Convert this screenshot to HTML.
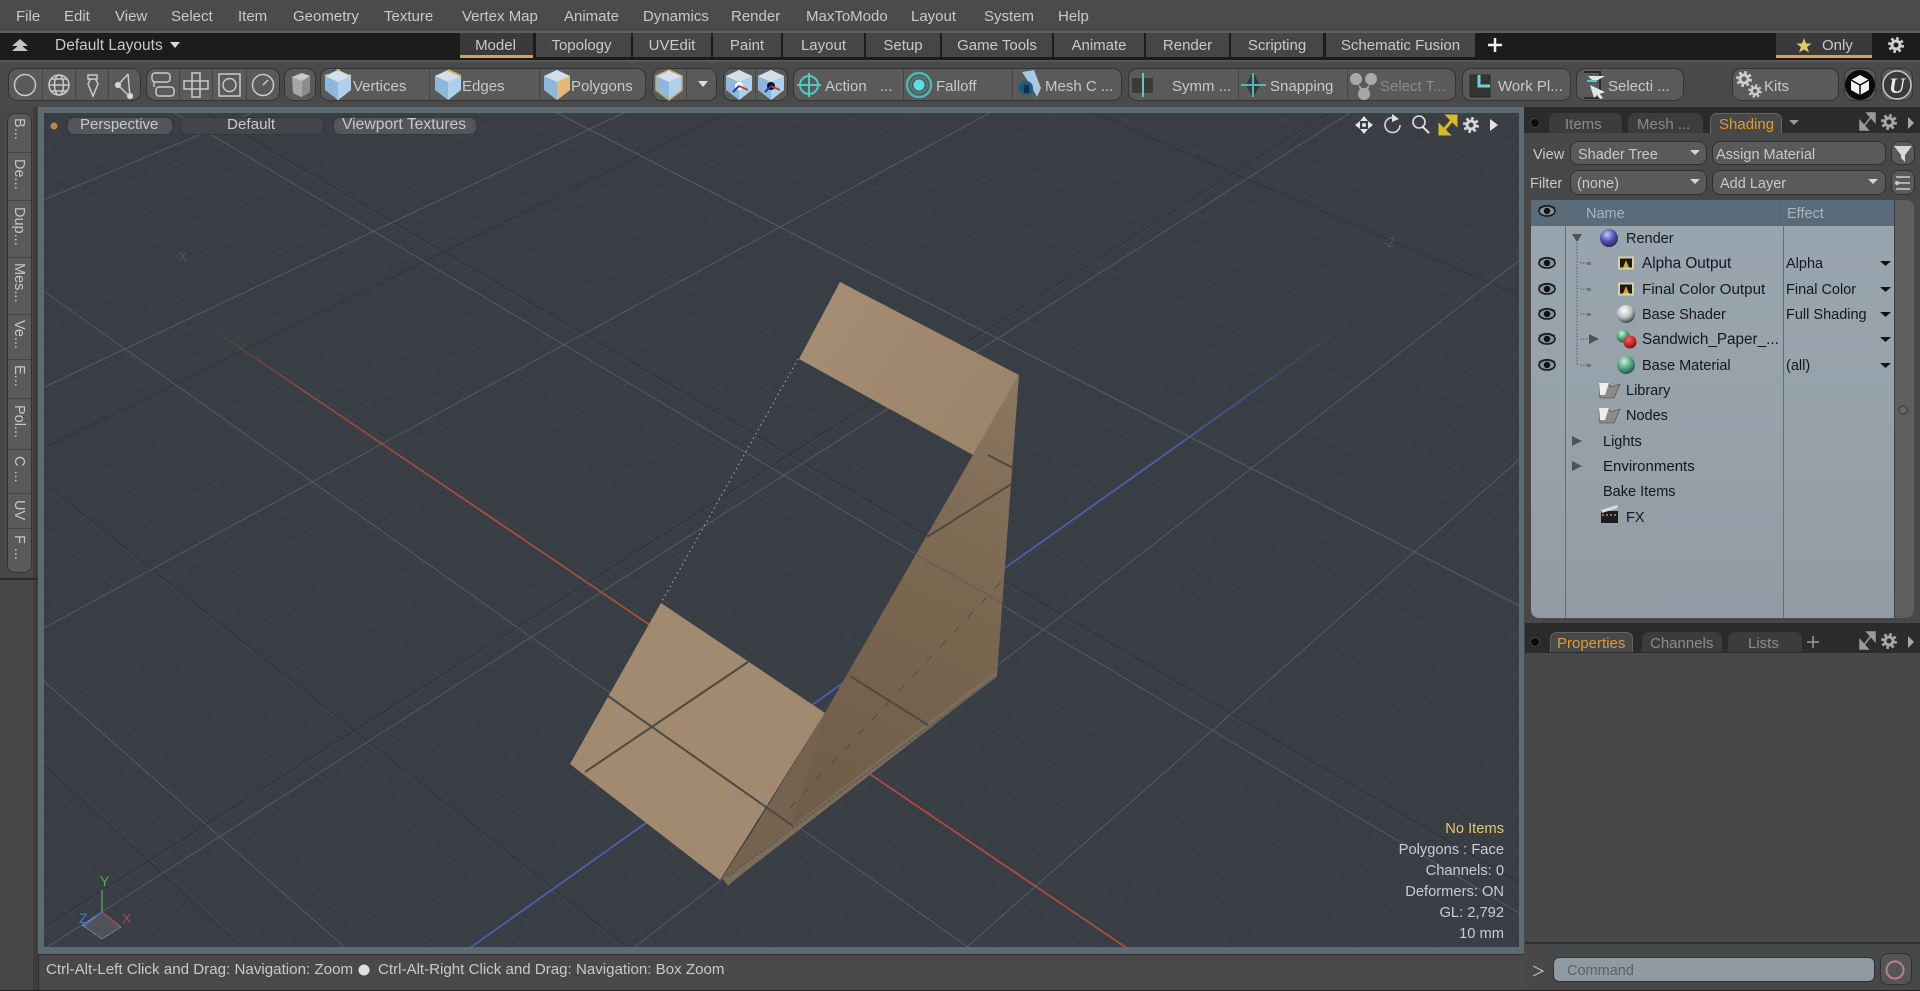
<!DOCTYPE html>
<html><head><meta charset="utf-8"><title>Modo</title>
<style>
html,body{margin:0;padding:0;background:#4a4a4a;overflow:hidden}
#r{position:relative;width:1920px;height:991px;overflow:hidden;font-family:"Liberation Sans",sans-serif;font-size:15px;color:#c9c9c9}
.d,.t{position:absolute}
.t{white-space:nowrap;line-height:18px;height:18px;margin-top:1px}
svg{position:absolute;left:0;top:0}
.tab{position:absolute;top:33px;height:24px;background:#464646}
.g{position:absolute;top:68px;height:33px;background:#5a5a5a;border:1px solid #343434;border-radius:9px;box-sizing:border-box}
.s{position:absolute;top:69px;height:31px;width:1px;background:#454545}
.pill{position:absolute;top:117px;height:18px;border-radius:7px;background:#51575b;border:1px solid #33383b;box-sizing:border-box}
.c{position:absolute;background:#5a5a5a;border:1px solid #303030;border-radius:8px;box-sizing:border-box}
.vt{position:absolute;left:7px;width:24px;text-align:center;writing-mode:vertical-rl;line-height:24px;font-size:14.5px;color:#c8c8c8;white-space:nowrap}
.n{color:#14181c;font-size:14.5px}
.h{color:#a9b5bf;font-size:14.5px}
.i{font-size:14.7px;color:#c9cdd0;right:416px;margin-top:0}
.pt{position:absolute;height:20px;background:#3c3c3c;border-radius:7px 7px 0 0}
</style></head><body><div id="r">

<!-- chrome backgrounds -->
<div class="d" style="left:0;top:0;width:1920px;height:32px;background:#4b4b4b"></div>
<div class="d" style="left:0;top:31px;width:1920px;height:2px;background:#5e5e5e"></div>
<div class="d" style="left:0;top:33px;width:1920px;height:27px;background:#1c1c1c"></div>
<div class="d" style="left:0;top:60px;width:1920px;height:47px;background:#4a4a4a;border-top:2px solid #575757;box-sizing:border-box"></div>
<div class="d" style="left:0;top:107px;width:38px;height:884px;background:#484848"></div>
<div class="d" style="left:33px;top:107px;width:5px;height:884px;background:#3d3d3d"></div>
<div class="d" style="left:0;top:578px;width:38px;height:2px;background:#2c2c2c"></div>
<div class="d" style="left:38px;top:107px;width:1486px;height:847px;background:#5c6a71"></div>
<div class="d" style="left:38px;top:954px;width:1487px;height:37px;background:#494949;border-top:1px solid #303030;border-left:1px solid #2c2c2c;box-sizing:border-box"></div>
<div class="d" style="left:1524px;top:107px;width:396px;height:884px;background:#484848"></div>
<div class="d" style="left:1524px;top:107px;width:396px;height:26px;background:#2b2b2b"></div>
<div class="d" style="left:1525px;top:623px;width:395px;height:30px;background:#2b2b2b"></div>
<div class="d" style="left:1525px;top:942px;width:395px;height:2px;background:#2e2e2e"></div>
<div class="d" style="left:0;top:990px;width:1920px;height:1px;background:#222"></div>

<!-- layout tabs -->
<div class="tab" style="left:460px;width:73px;background:#3a3a3a;border-bottom:3px solid #d8a058;height:22px"></div>
<div class="tab" style="left:536px;width:95px"></div>
<div class="tab" style="left:633px;width:78px"></div>
<div class="tab" style="left:713px;width:68px"></div>
<div class="tab" style="left:783px;width:81px"></div>
<div class="tab" style="left:866px;width:74px"></div>
<div class="tab" style="left:942px;width:110px"></div>
<div class="tab" style="left:1054px;width:90px"></div>
<div class="tab" style="left:1146px;width:83px"></div>
<div class="tab" style="left:1231px;width:92px"></div>
<div class="tab" style="left:1326px;width:149px"></div>
<div class="tab" style="left:1776px;width:96px;background:#3a3a3a;border-bottom:3px solid #d8a058;height:22px"></div>

<!-- toolbar groups -->
<div class="g" style="left:8px;width:133px"></div><div class="s" style="left:42px"></div><div class="s" style="left:75px"></div><div class="s" style="left:108px"></div>
<div class="g" style="left:146px;width:134px"></div><div class="s" style="left:179px"></div><div class="s" style="left:212px"></div><div class="s" style="left:246px"></div>
<div class="g" style="left:284px;width:32px"></div>
<div class="g" style="left:320px;width:326px"></div><div class="s" style="left:429px"></div><div class="s" style="left:539px"></div>
<div class="g" style="left:652px;width:65px"></div><div class="s" style="left:686px"></div>
<div class="g" style="left:723px;width:65px"></div><div class="s" style="left:755px"></div>
<div class="g" style="left:793px;width:329px"></div><div class="s" style="left:903px"></div><div class="s" style="left:1012px"></div>
<div class="g" style="left:1128px;width:328px"></div><div class="s" style="left:1238px"></div><div class="s" style="left:1347px"></div>
<div class="g" style="left:1462px;width:109px"></div>
<div class="g" style="left:1576px;width:108px"></div>
<div class="g" style="left:1732px;width:107px"></div>
<div class="g" style="left:1844px;width:32px"></div>
<div class="g" style="left:1881px;width:32px"></div>

<!-- left vertical tabs -->
<div class="d" style="left:7px;top:113px;width:25px;height:460px;background:#5a5a5a;border:1px solid #333;border-radius:8px;box-sizing:border-box"></div>
<div class="d" style="left:8px;top:152px;width:23px;height:1px;background:#444"></div>
<div class="d" style="left:8px;top:200px;width:23px;height:1px;background:#444"></div>
<div class="d" style="left:8px;top:257px;width:23px;height:1px;background:#444"></div>
<div class="d" style="left:8px;top:314px;width:23px;height:1px;background:#444"></div>
<div class="d" style="left:8px;top:359px;width:23px;height:1px;background:#444"></div>
<div class="d" style="left:8px;top:398px;width:23px;height:1px;background:#444"></div>
<div class="d" style="left:8px;top:449px;width:23px;height:1px;background:#444"></div>
<div class="d" style="left:8px;top:493px;width:23px;height:1px;background:#444"></div>
<div class="d" style="left:8px;top:528px;width:23px;height:1px;background:#444"></div>
<div class="vt" style="top:118px">B...</div>
<div class="vt" style="top:159px">De...</div>
<div class="vt" style="top:207px">Dup...</div>
<div class="vt" style="top:263px">Mes...</div>
<div class="vt" style="top:320px">Ve...</div>
<div class="vt" style="top:365px">E...</div>
<div class="vt" style="top:405px">Pol...</div>
<div class="vt" style="top:456px">C ...</div>
<div class="vt" style="top:500px">UV</div>
<div class="vt" style="top:535px">F ...</div>

<!-- viewport scene -->
<svg width="1475" height="834" viewBox="44 113 1475 834" style="left:44px;top:113px">
<defs>
<linearGradient id="rd" gradientUnits="userSpaceOnUse" x1="190" y1="315" x2="480" y2="510"><stop offset="0" stop-color="#a8483f" stop-opacity="0"/><stop offset=".4" stop-color="#a8483f" stop-opacity=".75"/><stop offset="1" stop-color="#ad4b42"/></linearGradient>
<linearGradient id="bl" gradientUnits="userSpaceOnUse" x1="1365" y1="312" x2="1150" y2="465"><stop offset="0" stop-color="#4a5fae" stop-opacity="0"/><stop offset="1" stop-color="#4a5fae"/></linearGradient>
<linearGradient id="sd" gradientUnits="userSpaceOnUse" x1="1010" y1="380" x2="780" y2="860"><stop offset="0" stop-color="#8b7660"/><stop offset=".45" stop-color="#79664f"/><stop offset="1" stop-color="#6d5b48"/></linearGradient>
<linearGradient id="st" gradientUnits="userSpaceOnUse" x1="800" y1="300" x2="1000" y2="440"><stop offset="0" stop-color="#a58e73"/><stop offset="1" stop-color="#9b846a"/></linearGradient>
</defs>
<rect x="44" y="113" width="1475" height="834" fill="#383e44"/>
<!-- minor family A -->
<path fill="none" stroke="#454c52" stroke-opacity=".45" d="M-2185 -1291L1600 142-2185 -1291 1600 178-2185 -1291 1600 214-2185 -1291 1600 250-2185 -1291 1600 286-2185 -1291 1600 322-2185 -1291 1600 358-2185 -1291 1600 394-2185 -1291 1600 430-2185 -1291 1600 466-2185 -1291 1600 502-2185 -1291 1600 538-2185 -1291 1600 574-2185 -1291 1600 610-2185 -1291 1600 646-2185 -1291 1600 682-2185 -1291 1600 718-2185 -1291 1600 754-2185 -1291 1600 790-2185 -1291 1600 826-2185 -1291 1600 862-2185 -1291 1600 898-2185 -1291 1600 934-2185 -1291 1583 960-2185 -1291 1524 960-2185 -1291 1467 960-2185 -1291 1411 960-2185 -1291 1358 960-2185 -1291 1305 960-2185 -1291 1255 960-2185 -1291 1205 960-2185 -1291 1157 960-2185 -1291 1111 960-2185 -1291 1066 960-2185 -1291 1022 960-2185 -1291 979 960-2185 -1291 937 960-2185 -1291 896 960-2185 -1291 857 960-2185 -1291 818 960-2185 -1291 781 960-2185 -1291 744 960-2185 -1291 708 960-2185 -1291 673 960-2185 -1291 639 960-2185 -1291 606 960-2185 -1291 573 960-2185 -1291 541 960-2185 -1291 510 960-2185 -1291 480 960-2185 -1291 450 960-2185 -1291 421 960-2185 -1291 393 960-2185 -1291 365 960-2185 -1291 338 960-2185 -1291 311 960-2185 -1291 285 960-2185 -1291 260 960-2185 -1291 235 960-2185 -1291 210 960-2185 -1291 186 960-2185 -1291 163 960-2185 -1291 140 960-2185 -1291 117 960-2185 -1291 95 960-2185 -1291 73 960-2185 -1291 52 960"/>
<!-- minor family B -->
<path fill="none" stroke="#454c52" stroke-opacity=".45" d="M3400 -1200L0 130 3400 -1200 0 166 3400 -1200 0 202 3400 -1200 0 238 3400 -1200 0 274 3400 -1200 0 310 3400 -1200 0 346 3400 -1200 0 382 3400 -1200 0 418 3400 -1200 0 454 3400 -1200 0 490 3400 -1200 0 526 3400 -1200 0 562 3400 -1200 0 598 3400 -1200 0 634 3400 -1200 0 670 3400 -1200 0 706 3400 -1200 0 742 3400 -1200 0 778 3400 -1200 0 814 3400 -1200 0 850 3400 -1200 0 886 3400 -1200 0 922 3400 -1200 0 958 3400 -1200 53 960 3400 -1200 107 960 3400 -1200 159 960 3400 -1200 210 960 3400 -1200 259 960 3400 -1200 306 960 3400 -1200 353 960 3400 -1200 398 960 3400 -1200 441 960 3400 -1200 483 960 3400 -1200 525 960 3400 -1200 565 960 3400 -1200 603 960 3400 -1200 641 960 3400 -1200 678 960 3400 -1200 714 960 3400 -1200 749 960 3400 -1200 783 960 3400 -1200 816 960 3400 -1200 848 960 3400 -1200 880 960 3400 -1200 911 960 3400 -1200 941 960 3400 -1200 970 960 3400 -1200 998 960 3400 -1200 1026 960 3400 -1200 1054 960 3400 -1200 1080 960 3400 -1200 1106 960 3400 -1200 1132 960 3400 -1200 1157 960 3400 -1200 1181 960 3400 -1200 1205 960 3400 -1200 1229 960 3400 -1200 1251 960 3400 -1200 1274 960 3400 -1200 1296 960 3400 -1200 1317 960 3400 -1200 1338 960 3400 -1200 1359 960 3400 -1200 1379 960 3400 -1200 1399 960 3400 -1200 1418 960 3400 -1200 1437 960 3400 -1200 1456 960 3400 -1200 1474 960 3400 -1200 1492 960"/>
<!-- dark lines -->
<path fill="none" stroke="#2f3439" d="M-2185 -1291L1600 930M-2185 -1291L643 960M3400 -1200L0 955M-2185 -1291L1600 330M3400 -1200L0 470M-2185 -1291L256 960"/>
<!-- major lines -->
<path fill="none" stroke="#565d62" d="M-2185 -1291L1600 647M-2185 -1291L1600 961M-2185 -1291L986 960M-2185 -1291L359 960M3400 -1200L0 218M3400 -1200L0 408M3400 -1200L0 652M3400 -1200L27 960M3400 -1200L618 960M3400 -1200L952 960"/>
<!-- axes -->
<path fill="none" stroke="url(#rd)" stroke-width="1.8" d="M190 314L480 510"/>
<path fill="none" stroke="#ad4b42" stroke-width="1.8" d="M480 510L1140 957"/>
<path fill="none" stroke="url(#bl)" stroke-width="1.8" d="M1365 312L1150 465"/>
<path fill="none" stroke="#4a5fae" stroke-width="1.8" d="M1150 465L460 955"/>
<text x="174" y="261" font-size="13" fill="#50575c" font-family="Liberation Sans,sans-serif">-X</text>
<text x="1383" y="247" font-size="13" fill="#50575c" font-family="Liberation Sans,sans-serif">-Z</text>
<!-- mesh -->
<polygon points="1019,375 973,455 825,713 728,885 997,676 1012,470" fill="url(#sd)"/>
<polygon points="840,282 1019,375 973,455 799,359" fill="url(#st)"/>
<polygon points="661,603 825,713 720,880 570,764" fill="#a18a6f"/>
<polygon points="825,713 750,835 722,878 728,886 790,830" fill="#75634f"/>
<polygon points="728,885 997,676 997,670 724,878" fill="#7f6d58"/>
<path fill="none" stroke="#4c4a44" stroke-width="2" d="M748 662L585 772M608 696L793 826M850 676L928 725M988 455L1013 468M927 537L1013 483"/>
<path fill="none" stroke="#5e6064" stroke-width="2" stroke-dasharray="3 1" d="M917 555L1002 603"/>
<path fill="none" stroke="#5f5e5c" stroke-width="2" stroke-dasharray="4 1" d="M727 877L997 676"/>
<path fill="none" stroke="#4c4a44" stroke-width="1" stroke-dasharray="8 12" d="M790 808L1000 583"/>
<path fill="none" stroke="#aeb4b8" stroke-width="1" stroke-dasharray="1.500 3.500" d="M798 359L661 603"/>
<!-- gizmo -->
<polygon points="102,912 121,927 102,939 82,925" fill="#505458" stroke="#aab" stroke-width=".7" stroke-dasharray="2 1"/>
<path d="M102 912V890" stroke="#4ab050" stroke-width="1.3"/>
<path d="M102 912L120 926" stroke="#b04848" stroke-width="1.3"/>
<path d="M102 912L84 926" stroke="#5070d0" stroke-width="1.3"/>
<text x="100" y="886" font-size="14" fill="#4ab050" font-family="Liberation Sans,sans-serif">Y</text>
<text x="122" y="923" font-size="14" fill="#b04848" font-family="Liberation Sans,sans-serif">X</text>
<text x="79" y="923" font-size="14" fill="#5070d0" font-family="Liberation Sans,sans-serif">Z</text>
</svg>

<!-- viewport pills -->
<div class="pill" style="left:67px;width:106px"></div>
<div class="pill" style="left:180px;width:144px;background:#40464a"></div>
<div class="pill" style="left:333px;width:144px"></div>

<!-- right panel widgets -->
<div class="pt" style="left:1549px;top:113px;width:73px"></div>
<div class="pt" style="left:1628px;top:113px;width:75px"></div>
<div class="pt" style="left:1710px;top:113px;width:72px;background:#484848;border:1px solid #666;border-bottom:0;box-sizing:border-box"></div>
<div class="pt" style="left:1550px;top:632px;width:83px;background:#484848;border:1px solid #666;border-bottom:0;box-sizing:border-box"></div>
<div class="pt" style="left:1642px;top:632px;width:80px"></div>
<div class="pt" style="left:1728px;top:632px;width:74px"></div>
<div class="c" style="left:1570px;top:141px;width:137px;height:24px"></div>
<div class="c" style="left:1712px;top:141px;width:174px;height:24px"></div>
<div class="c" style="left:1891px;top:141px;width:24px;height:24px"></div>
<div class="c" style="left:1570px;top:170px;width:137px;height:25px"></div>
<div class="c" style="left:1712px;top:170px;width:174px;height:25px"></div>
<div class="c" style="left:1891px;top:170px;width:24px;height:25px"></div>
<div class="d" style="left:1531px;top:200px;width:383px;height:418px;border-radius:0 8px 8px 8px;background:#5f5f5f;overflow:hidden">
 <div class="d" style="left:0;top:0;width:363px;height:418px;background:linear-gradient(#9aa6af,#929ca5)"></div>
 <div class="d" style="left:0;top:0;width:363px;height:26px;background:#5a6b7a"></div>
 <div class="d" style="left:34px;top:0;width:1px;height:418px;background:#666f77"></div>
 <div class="d" style="left:252px;top:0;width:1px;height:418px;background:#666f77"></div>
 <div class="d" style="left:363px;top:0;width:1px;height:418px;background:#3d3d3d"></div>
</div>
<div class="d" style="left:1553px;top:957px;width:322px;height:25px;border-radius:6px;background:#8f9aa3;border:1px solid #2f3336;box-sizing:border-box"></div>
<div class="c" style="left:1880px;top:953px;width:32px;height:32px;background:#555"></div>

<!-- icon overlay -->
<svg width="1920" height="991" viewBox="0 0 1920 991">
<defs>
<radialGradient id="sB" cx=".4" cy=".3" r=".75"><stop offset="0" stop-color="#c4c4f4"/><stop offset=".5" stop-color="#5656b8"/><stop offset="1" stop-color="#20204a"/></radialGradient>
<radialGradient id="sW" cx=".4" cy=".3" r=".75"><stop offset="0" stop-color="#fff"/><stop offset=".55" stop-color="#bdbdbd"/><stop offset="1" stop-color="#333"/></radialGradient>
<radialGradient id="sG" cx=".4" cy=".3" r=".75"><stop offset="0" stop-color="#d0f0e0"/><stop offset=".5" stop-color="#5aa884"/><stop offset="1" stop-color="#1f4a36"/></radialGradient>
<radialGradient id="sR" cx=".4" cy=".3" r=".75"><stop offset="0" stop-color="#f06060"/><stop offset=".6" stop-color="#c02828"/><stop offset="1" stop-color="#601010"/></radialGradient>
<g id="gear"><circle r="6.500" fill="none" stroke="currentColor" stroke-width="3" stroke-dasharray="2.600 2.500"/><circle r="4" fill="none" stroke="currentColor" stroke-width="3"/></g>
<g id="eye"><ellipse rx="8" ry="5" fill="#87919a" stroke="#1a1a1a" stroke-width="1.600"/><circle r="3.200" fill="#111"/><path d="M-8 -3Q0 -8 8 -3" fill="none" stroke="#222" stroke-width="1.200"/></g>
<g id="cube"><path d="M0 -15L13 -9V5L0 15L-13 5V-9Z" fill="#8fb7dc"/><path d="M0 -15L13 -9L0 -3L-13 -9Z" fill="#d3dfe9"/><path d="M0 -3L13 -9V5L0 15Z" fill="#afd0ec"/></g>
<g id="folder"><path d="M-10 -5L-9 8H5L11 -6L2 -3L-1 -7Z" fill="#8c8c84" stroke="#444" stroke-width=".6"/><path d="M-10 -7H0L-4 5H-9Z" fill="#eee"/></g>
<g id="picon"><rect x="-8" y="-6.500" width="16" height="13" fill="#d8d0a8"/><rect x="-6" y="-4.500" width="12" height="9" fill="#1c1a10"/><path d="M-3 4.500L0 -3L3 4.500Z" fill="#d4a82c"/></g>
<path id="tri" d="M-5 -5L5 0L-5 5Z" fill="#4b5258"/>
</defs>

<!-- layout tab bar -->
<path d="M20 39L28 46H12ZM20 44L28 51H12Z" fill="#c4c4c4"/>
<path d="M170 42H180L175 48Z" fill="#d8d8d8"/>
<path d="M1495 38V52M1488 45H1502" stroke="#f0f0f0" stroke-width="2.500"/>
<path d="M1804 38L1806 43.500H1811.500L1807 47L1809 52.500L1804 49.500L1799 52.500L1801 47L1796.500 43.500H1802Z" fill="#dccb5e"/>
<use href="#gear" x="1896" y="45" color="#d0d0d0"/>

<!-- toolbar group 1 -->
<g fill="none" stroke="#c9c9c9" stroke-width="1.500">
<circle cx="25" cy="85" r="10.500"/>
<circle cx="59" cy="85" r="10"/><ellipse cx="59" cy="85" rx="4.500" ry="10"/><path d="M49 85H69M51 79H67M51 91H67"/>
<path d="M88 75H97V79L96 80L98 84L93 96L88 84L90 80L88 79ZM89 79H96" />
<path d="M128 74L118 85L130 97M128 74L130 97" /><circle cx="118" cy="85" r="2.500" fill="#ddd"/><circle cx="130" cy="96" r="2.500" fill="#ddd"/>
<rect x="152" y="73" width="18" height="9" rx="3"/><rect x="156" y="87" width="18" height="9" rx="3"/><path d="M154 82V87"/>
<path d="M192 73H200V81H208V89H200V97H192V89H184V81H192ZM192 81V89H200V81Z"/>
<rect x="219" y="74" width="21" height="22"/><circle cx="229.500" cy="85" r="6.500"/>
<circle cx="263" cy="85" r="10.500"/><path d="M263 85L268 80"/>
</g>
<path d="M292 77L302 73L310 76V92L301 97L293 93Z" fill="#a6a6a6"/><path d="M292 77L302 81L310 76L302 73Z" fill="#c8c8c8"/><path d="M302 81V97L310 92V76Z" fill="#8c8c8c"/>

<use href="#cube" x="338" y="85"/><path d="M325 76L338 70L351 76M338 100V94" fill="none" stroke="#d8c46a" stroke-width="2" stroke-dasharray="3 10"/>
<use href="#cube" x="448" y="85"/><path d="M448 70L461 76" stroke="#d8b060" stroke-width="2"/>
<use href="#cube" x="557" y="85"/><path d="M557 82L570 76V90L557 100Z" fill="#e6b878"/>
<use href="#cube" x="669" y="85"/><path d="M669 70L682 76V90L669 100L656 90V76Z" fill="none" stroke="#c8a878" stroke-width="1.500"/>
<path d="M698 81H708L703 87Z" fill="#ddd"/>
<use href="#cube" x="739" y="85"/><circle cx="739" cy="86" r="4" fill="#fff"/><path d="M739 86L748 90" stroke="#c04040" stroke-width="2"/><path d="M739 86L733 92" stroke="#2040a0" stroke-width="2"/>
<use href="#cube" x="771" y="85"/><circle cx="771" cy="86" r="4" fill="#111"/><path d="M771 86L780 90" stroke="#c04040" stroke-width="2"/><path d="M771 86L765 92" stroke="#2040a0" stroke-width="2"/>

<g fill="none" stroke="#55c8c4" stroke-width="2"><circle cx="809" cy="85" r="9"/><path d="M797 85H821M809 73V97"/></g>
<circle cx="919" cy="85" r="12" fill="none" stroke="#4fb4b4" stroke-width="2.500"/><circle cx="919" cy="85" r="8" fill="none" stroke="#3a8e90" stroke-width="1.500"/><circle cx="919" cy="85" r="5.500" fill="#5fe0e0"/>
<path d="M1022 72L1034 70L1041 88L1037 97L1030 84Z" fill="#a8c8e0"/><circle cx="1026" cy="88" r="7" fill="#1a5a88"/><path d="M1024 85H1029V93H1024Z" fill="#0d2f4c"/>

<rect x="1132" y="78" width="21" height="15" fill="#3a3a3a"/><path d="M1143 73V97" stroke="#5cc8c4" stroke-width="2"/>
<path d="M1253 72L1260 85L1253 98L1246 85Z" fill="#2e3a3c"/><path d="M1241 85H1266M1253 73V97" stroke="#55b8b4" stroke-width="2"/>
<g fill="#a8a8a8"><circle cx="1356" cy="79" r="6"/><circle cx="1371" cy="79" r="6"/><path d="M1358 84L1364 90L1370 84L1368 90L1360 90Z"/><circle cx="1364" cy="94" r="6"/></g>

<rect x="1470" y="75" width="20" height="22" fill="#343434" stroke="#2a2a2a"/><path d="M1479 75V86H1490" fill="none" stroke="#6cd0d8" stroke-width="3"/>
<path d="M1584 72H1600V98H1584" fill="none" stroke="#2a2a2a" stroke-width="2"/><path d="M1588 76H1605L1598 80H1592ZM1590 85L1605 92L1600 94L1603 98L1600 99L1597 95L1594 98Z" fill="#d8e8ec"/><path d="M1587 81H1597" stroke="#5cc8c4" stroke-width="2"/>
<g transform="translate(1744 79)" color="#ccc"><use href="#gear"/></g>
<g transform="translate(1755 91) scale(.85)" color="#ccc"><use href="#gear"/></g>
<circle cx="1860" cy="85" r="15" fill="#0a0a0a"/><path d="M1860 75L1869 80V90L1860 95L1851 90V80Z" fill="#f0f0f0"/><path d="M1851 80L1860 85L1869 80M1860 85V95" stroke="#0a0a0a" stroke-width="1.500" fill="none"/>
<circle cx="1897" cy="85" r="14" fill="#3a3a3a" stroke="#c8c8c8" stroke-width="1.500"/>
<text x="1897" y="93" font-size="22" font-weight="bold" font-style="italic" text-anchor="middle" fill="#ececec" font-family="Liberation Serif,serif">U</text>

<!-- viewport dot + icons -->
<circle cx="54" cy="126" r="3.500" fill="#b98a3a"/>
<g fill="#e4e4e4"><path d="M1364 116L1368 121H1360ZM1364 134L1368 129H1360ZM1355 125L1360 121V129ZM1373 125L1368 121V129Z"/><circle cx="1364" cy="125" r="2"/></g>
<path d="M1397 119A7.500 7.500 0 1 0 1400 125" fill="none" stroke="#d8d8d8" stroke-width="1.600"/><path d="M1392 114L1399 119L1392 122Z" fill="#e0e0e0"/>
<circle cx="1419" cy="122" r="6" fill="none" stroke="#e0e0e0" stroke-width="1.600"/><path d="M1423 127L1429 133" stroke="#e0e0e0" stroke-width="2"/>
<path d="M1441 133L1455 117M1456 116H1448L1456 124ZM1440 134H1448L1440 126Z" stroke="#d8b82c" stroke-width="3" fill="#d8b82c"/>
<use href="#gear" x="1471" y="125" color="#d6d6d6"/>
<path d="M1490 119L1498 125L1490 131Z" fill="#e4e4e4"/>

<!-- panel header icons -->
<circle cx="1535" cy="123" r="4.500" fill="#0c0c0c" stroke="#444"/>
<path d="M1789 120H1799L1794 125Z" fill="#999"/>
<path d="M1860 130V121L1868 130ZM1875 113V122L1867 113ZM1864 126L1871 117" fill="#9a9a9a" stroke="#9a9a9a" stroke-width="1.500"/>
<use href="#gear" x="1889" y="122" color="#a8a8a8"/>
<path d="M1908 117L1914 123L1908 129Z" fill="#a8a8a8"/>
<circle cx="1535" cy="642" r="4.500" fill="#0c0c0c" stroke="#444"/>
<path d="M1813 636V648M1807 642H1819" stroke="#999" stroke-width="1.500"/>
<path d="M1860 649V640L1868 649ZM1875 632V641L1867 632ZM1864 645L1871 636" fill="#9a9a9a" stroke="#9a9a9a" stroke-width="1.500"/>
<use href="#gear" x="1889" y="641" color="#a8a8a8"/>
<path d="M1908 636L1914 642L1908 648Z" fill="#a8a8a8"/>

<!-- combo carets -->
<g fill="#d4d4d4"><path d="M1690 150H1700L1695 155Z"/><path d="M1690 179H1700L1695 184Z"/><path d="M1868 179H1878L1873 184Z"/></g>
<path d="M1894 146H1912L1905 155V162L1901 158V155Z" fill="#d8d8d8"/>
<path d="M1896 177H1910M1896 183H1910M1896 189H1910" stroke="#ccc" stroke-width="1.500"/><circle cx="1897" cy="183" r="2" fill="#ccc"/>

<!-- tree -->
<use href="#eye" x="1547" y="211"/>
<use href="#eye" x="1547" y="263"/><use href="#eye" x="1547" y="289"/><use href="#eye" x="1547" y="314"/><use href="#eye" x="1547" y="339"/><use href="#eye" x="1547" y="365"/>
<path d="M1572 234H1582L1577 242Z" fill="#4b5258"/>
<path d="M1577 243V365M1580 263H1588M1580 289H1588M1580 314H1588M1580 339H1588M1580 365H1588" stroke="#555e66" stroke-dasharray="1.500 1.500" fill="none"/>
<g fill="#6b747c"><rect x="1587" y="262" width="4" height="3"/><rect x="1587" y="288" width="4" height="3"/><rect x="1587" y="313" width="4" height="3"/><rect x="1587" y="364" width="4" height="3"/></g>
<use href="#tri" x="1594" y="339"/><use href="#tri" x="1577" y="441"/><use href="#tri" x="1577" y="466"/>
<circle cx="1609" cy="238" r="9" fill="url(#sB)"/>
<use href="#picon" x="1626" y="263"/><use href="#picon" x="1626" y="289"/>
<circle cx="1626" cy="314" r="9" fill="url(#sW)"/>
<circle cx="1623" cy="336" r="6.500" fill="url(#sG)"/><circle cx="1630" cy="342" r="6.500" fill="url(#sR)"/>
<circle cx="1626" cy="365" r="9" fill="url(#sG)"/>
<use href="#folder" x="1609" y="390"/><use href="#folder" x="1609" y="415"/>
<rect x="1601" y="511" width="17" height="12" fill="#1c1c1c"/><path d="M1601 510L1617 505L1618 508L1602 513Z" fill="#d8d8d8"/><path d="M1602 515H1618" stroke="#d8d8d8" stroke-dasharray="2 2"/>
<g fill="#111"><path d="M1880 261H1891L1885.500 266Z"/><path d="M1880 287H1891L1885.500 292Z"/><path d="M1880 312H1891L1885.500 317Z"/><path d="M1880 337H1891L1885.500 342Z"/><path d="M1880 363H1891L1885.500 368Z"/></g>
<circle cx="1903" cy="410" r="4" fill="#6c6c6c" stroke="#4a4a4a" stroke-width="2"/>

<!-- command -->
<circle cx="1895" cy="970" r="8.500" fill="none" stroke="#b57f86" stroke-width="2.200"/>
<path d="M1533 966L1543 971L1533 976" fill="none" stroke="#bbb" stroke-width="1.200"/>
<circle cx="364" cy="970" r="5.500" fill="#e0e0e0"/>
</svg>

<!-- menu text -->
<div class="t" style="left:16px;top:7px">File</div>
<div class="t" style="left:64px;top:7px">Edit</div>
<div class="t" style="left:115px;top:7px">View</div>
<div class="t" style="left:171px;top:7px">Select</div>
<div class="t" style="left:238px;top:7px">Item</div>
<div class="t" style="left:293px;top:7px">Geometry</div>
<div class="t" style="left:384px;top:7px">Texture</div>
<div class="t" style="left:462px;top:7px">Vertex Map</div>
<div class="t" style="left:564px;top:7px">Animate</div>
<div class="t" style="left:643px;top:7px">Dynamics</div>
<div class="t" style="left:731px;top:7px">Render</div>
<div class="t" style="left:806px;top:7px">MaxToModo</div>
<div class="t" style="left:911px;top:7px">Layout</div>
<div class="t" style="left:984px;top:7px">System</div>
<div class="t" style="left:1058px;top:7px">Help</div>

<!-- layout tabs text -->
<div class="t" style="left:55px;top:36px;font-size:15.500px">Default Layouts</div>
<div class="t" style="left:459px;top:36px;width:73px;text-align:center">Model</div>
<div class="t" style="left:534px;top:36px;width:95px;text-align:center">Topology</div>
<div class="t" style="left:633px;top:36px;width:78px;text-align:center">UVEdit</div>
<div class="t" style="left:713px;top:36px;width:68px;text-align:center">Paint</div>
<div class="t" style="left:783px;top:36px;width:81px;text-align:center">Layout</div>
<div class="t" style="left:866px;top:36px;width:74px;text-align:center">Setup</div>
<div class="t" style="left:942px;top:36px;width:110px;text-align:center">Game Tools</div>
<div class="t" style="left:1054px;top:36px;width:90px;text-align:center">Animate</div>
<div class="t" style="left:1146px;top:36px;width:83px;text-align:center">Render</div>
<div class="t" style="left:1231px;top:36px;width:92px;text-align:center">Scripting</div>
<div class="t" style="left:1326px;top:36px;width:149px;text-align:center">Schematic Fusion</div>
<div class="t" style="left:1822px;top:36px">Only</div>

<!-- toolbar text -->
<div class="t" style="left:353px;top:77px">Vertices</div>
<div class="t" style="left:462px;top:77px">Edges</div>
<div class="t" style="left:571px;top:77px">Polygons</div>
<div class="t" style="left:825px;top:77px">Action</div>
<div class="t" style="left:880px;top:77px">...</div>
<div class="t" style="left:936px;top:77px">Falloff</div>
<div class="t" style="left:1045px;top:77px">Mesh C ...</div>
<div class="t" style="left:1172px;top:77px">Symm ...</div>
<div class="t" style="left:1270px;top:77px">Snapping</div>
<div class="t" style="left:1380px;top:77px;color:#8a8a8a">Select T...</div>
<div class="t" style="left:1498px;top:77px">Work Pl...</div>
<div class="t" style="left:1608px;top:77px">Selecti ...</div>
<div class="t" style="left:1764px;top:77px">Kits</div>

<!-- viewport text -->
<div class="t" style="left:80px;top:115px;font-size:15px">Perspective</div>
<div class="t" style="left:227px;top:115px;font-size:15.200px">Default</div>
<div class="t" style="left:342px;top:115px;font-size:15.700px">Viewport Textures</div>
<div class="t i" style="top:820px;color:#e6c56e">No Items</div>
<div class="t i" style="top:841px">Polygons : Face</div>
<div class="t i" style="top:862px">Channels: 0</div>
<div class="t i" style="top:883px">Deformers: ON</div>
<div class="t i" style="top:904px">GL: 2,792</div>
<div class="t i" style="top:925px">10 mm</div>

<!-- status -->
<div class="t" style="left:46px;top:960px;font-size:15.150px">Ctrl-Alt-Left Click and Drag: Navigation: Zoom</div>
<div class="t" style="left:378px;top:960px;font-size:15.100px">Ctrl-Alt-Right Click and Drag: Navigation: Box Zoom</div>

<!-- right panel text -->
<div class="t" style="left:1565px;top:115px;color:#8c8c8c">Items</div>
<div class="t" style="left:1637px;top:115px;color:#8c8c8c">Mesh ...</div>
<div class="t" style="left:1719px;top:115px;color:#dc9c3c">Shading</div>
<div class="t" style="left:1533px;top:145px;font-size:14.500px">View</div>
<div class="t" style="left:1530px;top:174px;font-size:14.500px">Filter</div>
<div class="t" style="left:1578px;top:145px;font-size:14.500px">Shader Tree</div>
<div class="t" style="left:1716px;top:145px;font-size:14.500px">Assign Material</div>
<div class="t" style="left:1577px;top:174px;font-size:14.500px">(none)</div>
<div class="t" style="left:1720px;top:174px;font-size:14.500px">Add Layer</div>
<div class="t h" style="left:1586px;top:204px">Name</div>
<div class="t h" style="left:1787px;top:204px">Effect</div>
<div class="t n" style="left:1626px;top:229px">Render</div>
<div class="t n" style="left:1642px;top:254px;font-size:15.300px">Alpha Output</div>
<div class="t n" style="left:1642px;top:280px;font-size:15.200px">Final Color Output</div>
<div class="t n" style="left:1642px;top:305px">Base Shader</div>
<div class="t n" style="left:1642px;top:330px;font-size:15.300px">Sandwich_Paper_...</div>
<div class="t n" style="left:1642px;top:356px">Base Material</div>
<div class="t n" style="left:1626px;top:381px">Library</div>
<div class="t n" style="left:1626px;top:406px">Nodes</div>
<div class="t n" style="left:1603px;top:432px">Lights</div>
<div class="t n" style="left:1603px;top:457px;font-size:15px">Environments</div>
<div class="t n" style="left:1603px;top:482px">Bake Items</div>
<div class="t n" style="left:1626px;top:508px">FX</div>
<div class="t n" style="left:1786px;top:254px">Alpha</div>
<div class="t n" style="left:1786px;top:280px">Final Color</div>
<div class="t n" style="left:1786px;top:305px">Full Shading</div>
<div class="t n" style="left:1786px;top:356px">(all)</div>
<div class="t" style="left:1557px;top:634px;color:#dc9c3c">Properties</div>
<div class="t" style="left:1650px;top:634px;color:#8c8c8c">Channels</div>
<div class="t" style="left:1748px;top:634px;color:#8c8c8c">Lists</div>
<div class="t" style="left:1567px;top:961px;color:#5a6167;font-size:14.500px">Command</div>
</div></body></html>
